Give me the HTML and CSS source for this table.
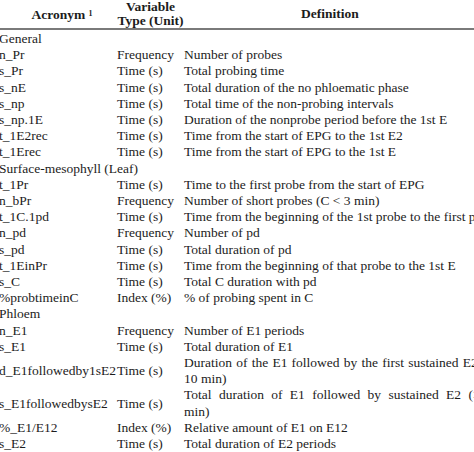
FILE: index.html
```html
<!DOCTYPE html>
<html>
<head>
<meta charset="utf-8">
<link rel="stylesheet" href="styles.css">
</head>
<body>
<table class="tbl">
  <thead>
    <tr>
      <th class="c1">Acronym <sup>1</sup></th>
      <th class="c2">Variable<br>Type (Unit)</th>
      <th class="c3">Definition</th>
    </tr>
  </thead>
  <tbody>
    <tr><td class="grp" colspan="3">General</td></tr>
    <tr><td>n_Pr</td><td>Frequency</td><td>Number of probes</td></tr>
    <tr><td>s_Pr</td><td>Time (s)</td><td>Total probing time</td></tr>
    <tr><td>s_nE</td><td>Time (s)</td><td>Total duration of the no phloematic phase</td></tr>
    <tr><td>s_np</td><td>Time (s)</td><td>Total time of the non-probing intervals</td></tr>
    <tr><td>s_np.1E</td><td>Time (s)</td><td>Duration of the nonprobe period before the 1st E</td></tr>
    <tr><td>t_1E2rec</td><td>Time (s)</td><td>Time from the start of EPG to the 1st E2</td></tr>
    <tr><td>t_1Erec</td><td>Time (s)</td><td>Time from the start of EPG to the 1st E</td></tr>
    <tr><td class="grp" colspan="3">Surface-mesophyll (Leaf)</td></tr>
    <tr><td>t_1Pr</td><td>Time (s)</td><td>Time to the first probe from the start of EPG</td></tr>
    <tr><td>n_bPr</td><td>Frequency</td><td>Number of short probes (C &lt; 3 min)</td></tr>
    <tr><td>t_1C.1pd</td><td>Time (s)</td><td>Time from the beginning of the 1st probe to the first pd</td></tr>
    <tr><td>n_pd</td><td>Frequency</td><td>Number of pd</td></tr>
    <tr><td>s_pd</td><td>Time (s)</td><td>Total duration of pd</td></tr>
    <tr><td>t_1EinPr</td><td>Time (s)</td><td>Time from the beginning of that probe to the 1st E</td></tr>
    <tr><td>s_C</td><td>Time (s)</td><td>Total C duration with pd</td></tr>
    <tr><td>%probtimeinC</td><td>Index (%)</td><td>% of probing spent in C</td></tr>
    <tr><td class="grp" colspan="3">Phloem</td></tr>
    <tr><td>n_E1</td><td>Frequency</td><td>Number of E1 periods</td></tr>
    <tr><td>s_E1</td><td>Time (s)</td><td>Total duration of E1</td></tr>
    <tr><td>d_E1followedby1sE2</td><td>Time (s)</td><td><div class="jl">Duration of the E1 followed by the first sustained E2 (&gt;</div><div>10 min)</div></td></tr>
    <tr><td>s_E1followedbysE2</td><td>Time (s)</td><td><div class="jl">Total duration of E1 followed by sustained E2 (&gt;10</div><div>min)</div></td></tr>
    <tr><td>%_E1/E12</td><td>Index (%)</td><td>Relative amount of E1 on E12</td></tr>
    <tr><td>s_E2</td><td>Time (s)</td><td>Total duration of E2 periods</td></tr>
  </tbody>
</table>
</body>
</html>
```
FILE: styles.css
```css
html, body {
  margin: 0;
  padding: 0;
  background: #ffffff;
  overflow: hidden;
}
body {
  width: 474px;
  height: 452px;
}
.tbl {
  border-collapse: collapse;
  font-family: "Liberation Serif", "Times New Roman", serif;
  font-size: 13.5px;
  color: #1c1c1c;
  margin-left: -1px;
  table-layout: fixed;
  width: 477px;
}
.tbl th {
  font-weight: bold;
  text-align: center;
  line-height: 14px;
  height: 27px;
  padding: 0;
  border-bottom: 2px solid #7a7a7a;
  vertical-align: middle;
}
.tbl th sup {
  font-size: 8px;
  vertical-align: 3px;
}
.c1 { width: 110px; }
.tbl th.c1 { padding-left: 8px; }
.c2 { width: 67px; }
.c3 { width: 292px; }
.tbl td {
  padding: 0;
  line-height: 16.2px;
  white-space: nowrap;
  vertical-align: middle;
}
.tbl tbody tr:first-child td {
  padding-top: 1px;
}
.jl {
  width: 310px;
  text-align: justify;
  text-align-last: justify;
}
```
